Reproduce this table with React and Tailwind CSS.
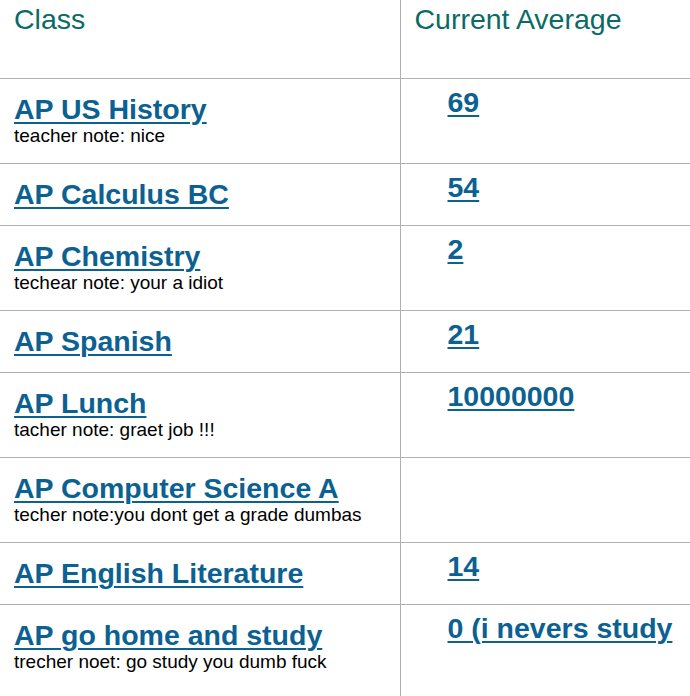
import React from "react";

const rows = [
  { name: "AP US History", note: "teacher note: nice", avg: "69" },
  { name: "AP Calculus BC", note: null, avg: "54" },
  { name: "AP Chemistry", note: "techear note: your a idiot", avg: "2" },
  { name: "AP Spanish", note: null, avg: "21" },
  { name: "AP Lunch", note: "tacher note: graet job !!!", avg: "10000000" },
  { name: "AP Computer Science A", note: "techer note:you dont get a grade dumbas", avg: null },
  { name: "AP English Literature", note: null, avg: "14" },
  { name: "AP go home and study", note: "trecher noet: go study you dumb fuck", avg: "0 (i nevers study" },
];

const App = () => {
  return (
    <div className="w-[690px] h-[696px] overflow-hidden bg-white font-['Liberation_Sans',Arial,sans-serif]">
      <table className="w-[690px] border-collapse table-fixed">
        <colgroup>
          <col className="w-[400px]" />
          <col />
        </colgroup>
        <thead>
          <tr className="h-[78px] border-b border-[#b0b0b0]">
            <th className="align-top text-left font-normal text-[28.5px] leading-8 text-[#0a6b66] pl-[14px] pt-[3px] border-r border-[#b0b0b0]">
              Class
            </th>
            <th className="align-top text-left font-normal text-[28.5px] leading-8 text-[#0a6b66] pl-[14px] pt-[3px]">
              Current Average
            </th>
          </tr>
        </thead>
        <tbody>
          {rows.map((row, i) => {
            const last = i === rows.length - 1;
            return (
              <tr key={row.name} className={last ? "" : "border-b border-[#b0b0b0]"}>
                <td
                  className={`align-top pl-[14px] pt-[14px] border-r border-[#b0b0b0] ${
                    last ? "pb-[40px]" : row.note ? "pb-[16px]" : "pb-[15px]"
                  }`}
                >
                  <a href="#" className="block text-[28.5px] leading-8 font-bold text-[#0b6191] underline underline-offset-[3px] decoration-2 whitespace-nowrap">
                    {row.name}
                  </a>
                  {row.note && (
                    <div className="text-[19px] leading-[22px] text-black whitespace-nowrap">
                      {row.note}
                    </div>
                  )}
                </td>
                <td className="align-top pl-[47px] pt-[7px] whitespace-nowrap">
                  {row.avg && (
                    <a href="#" className="text-[28.5px] leading-8 font-bold text-[#0b6191] underline underline-offset-[3px] decoration-2">
                      {row.avg}
                    </a>
                  )}
                </td>
              </tr>
            );
          })}
        </tbody>
      </table>
    </div>
  );
};

export default App;
